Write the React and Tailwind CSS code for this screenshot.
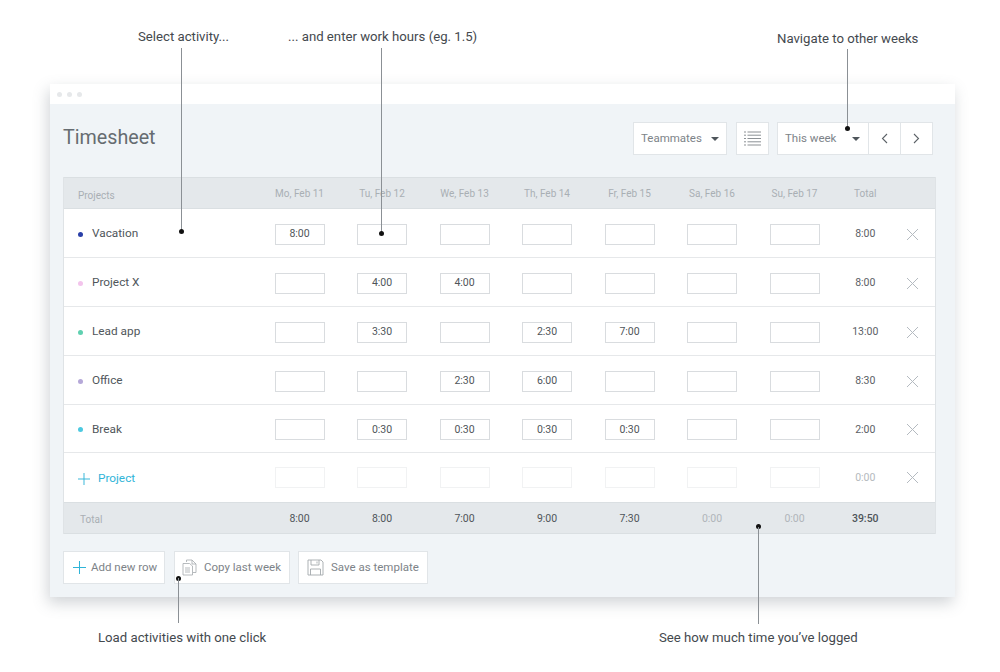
import React from "react";

const COLS = "grid grid-cols-[210.5px_repeat(7,82.5px)_26.5px_1fr] items-center";
const dates = ["Mo, Feb 11", "Tu, Feb 12", "We, Feb 13", "Th, Feb 14", "Fr, Feb 15", "Sa, Feb 16", "Su, Feb 17"];
const rows = [
  { name: "Vacation", dot: "bg-[#2a3fa8]", h: "h-[49px]", v: ["8:00", "", "", "", "", "", ""], total: "8:00" },
  { name: "Project X", dot: "bg-[#f3c4ec]", h: "h-[49px]", v: ["", "4:00", "4:00", "", "", "", ""], total: "8:00" },
  { name: "Lead app", dot: "bg-[#5fd0b0]", h: "h-[49px]", v: ["", "3:30", "", "2:30", "7:00", "", ""], total: "13:00" },
  { name: "Office", dot: "bg-[#b5a8d8]", h: "h-[49px]", v: ["", "", "2:30", "6:00", "", "", ""], total: "8:30" },
  { name: "Break", dot: "bg-[#4cc9e0]", h: "h-[48px]", v: ["", "0:30", "0:30", "0:30", "0:30", "", ""], total: "2:00" },
];
const totals = [["8:00", 1], ["8:00", 1], ["7:00", 1], ["9:00", 1], ["7:30", 1], ["0:00", 0], ["0:00", 0]];

function Close({ color = "#b4bac0" }) {
  return (
    <svg width="13" height="13" viewBox="0 0 13 13" fill="none" stroke={color} strokeWidth="1">
      <path d="M1 1l11 11M12 1L1 12" />
    </svg>
  );
}
function Plus({ size = 14 }) {
  return (
    <svg width={size} height={size} viewBox="0 0 14 14" fill="none" stroke="#2fb4d8" strokeWidth="1.1">
      <path d="M7 0v14M0 7h14" />
    </svg>
  );
}
function Caret() {
  return (
    <svg width="8" height="4" viewBox="0 0 8 4" fill="#4f565c">
      <path d="M0 0h8L4 4z" />
    </svg>
  );
}
function Pin({ className }) {
  return <div className={`absolute w-px bg-[#8b9095] ${className}`}><div className="absolute -bottom-[2px] -left-[2px] w-[5px] h-[5px] rounded-full bg-[#111]" /></div>;
}
function Caption({ className, children }) {
  return <div className={`absolute text-[13.2px] leading-4 text-[#44494e] whitespace-nowrap ${className}`}>{children}</div>;
}
function Cell({ value, faint }) {
  return (
    <div className={`w-[50px] h-[21px] bg-white flex items-center justify-center text-[10.5px] text-[#4f555a] border ${faint ? "border-[#f1f2f3]" : "border-[#d9dcdf]"}`}>
      {value}
    </div>
  );
}
function Btn({ className, children }) {
  return <div className={`h-[33px] bg-white border border-[#e1e5e8] flex items-center text-[11.5px] text-[#7d8388] ${className}`}>{children}</div>;
}

export default function App() {
  return (
    <div className="relative w-[1000px] h-[672px] bg-white overflow-hidden pt-[84px] pl-[50px] font-['Roboto',sans-serif]">
      <div className="w-[905px] h-[513px] bg-[#f0f4f7] shadow-[-2px_6px_14px_rgba(90,100,110,0.28)] flex flex-col">
        <div className="h-5 bg-white flex items-center gap-[5px] pl-[7px] shrink-0">
          <span className="w-[5px] h-[5px] rounded-full bg-[#e6e8ea]" />
          <span className="w-[5px] h-[5px] rounded-full bg-[#e6e8ea]" />
          <span className="w-[5px] h-[5px] rounded-full bg-[#e6e8ea]" />
        </div>
        <div className="h-[73px] shrink-0 pl-[13px] pr-[22px] flex items-start justify-between">
          <div className="text-[19.7px] leading-6 text-[#666c71] mt-[22px]">Timesheet</div>
          <div className="flex mt-[18px]">
            <Btn className="w-[94px] pl-[7px] justify-between pr-[7px] text-[#7d8388]"><span>Teammates</span><Caret /></Btn>
            <Btn className="w-[33px] ml-[9px] justify-center">
              <svg width="17" height="15" viewBox="0 0 17 15" fill="none" stroke="#6f757a" strokeWidth="0.8">
                <path d="M0 1h2M3.500 1H17M0 4.200h2M3.500 4.200H17M0 7.500h2M3.500 7.500H17M0 10.800h2M3.500 10.800H17M0 14h2M3.500 14H17" />
              </svg>
            </Btn>
            <Btn className="w-[92px] ml-[8px] pl-[7px] justify-between pr-[8px]"><span>This week</span><Caret /></Btn>
            <Btn className="w-[33px] -ml-px justify-center">
              <svg width="7" height="11" viewBox="0 0 7 11" fill="none" stroke="#5c6267" strokeWidth="1.1"><path d="M6 1L1.500 5.500 6 10" /></svg>
            </Btn>
            <Btn className="w-[33px] -ml-px justify-center">
              <svg width="7" height="11" viewBox="0 0 7 11" fill="none" stroke="#5c6267" strokeWidth="1.1"><path d="M1 1l4.500 4.500L1 10" /></svg>
            </Btn>
          </div>
        </div>
        <div className="ml-[13px] w-[873px] shrink-0 border-l border-r border-[#dfe3e6]">
          <div className={`${COLS} h-[32px] bg-[#e4e8eb] text-[10px] text-[#a9afb4] border-b border-t border-[#dadfe2]`}>
            <div className="pl-[14px] pt-[4px]">Projects</div>
            {dates.map((d) => (
              <div key={d} className="w-[50px] text-center whitespace-nowrap flex justify-center">{d}</div>
            ))}
            <div className="text-center whitespace-nowrap flex justify-center">Total</div>
            <div />
          </div>
          {rows.map((r) => (
            <div key={r.name} className={`${COLS} ${r.h} bg-white border-b border-[#e6e8ea] pt-[2px]`}>
              <div className="pl-[14px] flex items-center text-[11.8px] text-[#50565b]">
                <span className={`w-[5px] h-[5px] rounded-full ${r.dot}`} />
                <span className="ml-[9px]">{r.name}</span>
              </div>
              {r.v.map((v, i) => <Cell key={i} value={v} />)}
              <div className="text-[10.5px] text-[#5a6065] flex justify-center whitespace-nowrap">{r.total}</div>
              <div className="pl-[27px] flex items-center"><Close /></div>
            </div>
          ))}
          <div className={`${COLS} h-[49px] bg-white`}>
            <div className="pl-[14px] flex items-center text-[11.8px] text-[#2fb4d8] pt-[3px]">
              <Plus size={12} />
              <span className="ml-[8px]">Project</span>
            </div>
            {[0, 1, 2, 3, 4, 5, 6].map((i) => <Cell key={i} value="" faint />)}
            <div className="text-[10.5px] text-[#b4b9bd] flex justify-center whitespace-nowrap">0:00</div>
            <div className="pl-[27px] flex items-center"><Close /></div>
          </div>
          <div className={`${COLS} h-[32px] bg-[#e4e8eb] border-t border-b border-[#dadfe2] pt-[2px]`}>
            <div className="pl-[16px] text-[10px] text-[#a9afb4]">Total</div>
            {totals.map(([t, on], i) => (
              <div key={i} className={`w-[50px] text-center text-[10.5px] ${on ? "text-[#4f555a]" : "text-[#b0b5ba]"}`}>{t}</div>
            ))}
            <div className="text-[10.5px] text-[#4f555a] flex justify-center whitespace-nowrap font-medium">39:50</div>
            <div />
          </div>
        </div>
        <div className="flex ml-[13px] mt-[17px]">
          <Btn className="w-[102px] pl-[9px]">
            <Plus size={13} />
            <span className="ml-[5px]">Add new row</span>
          </Btn>
          <Btn className="w-[116px] ml-[9px] pl-[7px]">
            <svg width="15" height="17" viewBox="0 0 15 17" fill="none" stroke="#a4a9ad" strokeWidth="0.8">
              <path d="M4.500 3V1H10l4 4v8.500h-3M1 4.500h6.500L10.500 7v9H1zM3 9h5M3 11h5M3 13h5M10 1v4h4" />
            </svg>
            <span className="ml-[7px]">Copy last week</span>
          </Btn>
          <Btn className="w-[130px] ml-[8px] pl-[8px]">
            <svg width="17" height="17" viewBox="0 0 17 17" fill="none" stroke="#a4a9ad" strokeWidth="0.9">
              <path d="M1 1h13l2 2v13H1zM4 1v5h8V1M10 2.500v2M3.500 16v-6h10v6" />
            </svg>
            <span className="ml-[7px]">Save as template</span>
          </Btn>
        </div>
      </div>

      <Caption className="left-[138px] top-[29px]">Select activity...</Caption>
      <Caption className="left-[288px] top-[29px]">... and enter work hours (eg. 1.5)</Caption>
      <Caption className="left-[777px] top-[31px]">Navigate to other weeks</Caption>
      <Caption className="left-[98px] top-[630px]">Load activities with one click</Caption>
      <Caption className="left-[659px] top-[630px]">See how much time you’ve logged</Caption>

      <Pin className="left-[181px] top-[48px] h-[184px]" />
      <Pin className="left-[381px] top-[48px] h-[186px]" />
      <Pin className="left-[847px] top-[49px] h-[80px]" />
      <div className="absolute left-[176px] top-[576px] w-[5px] h-[5px] rounded-full bg-[#111]" />
      <div className="absolute left-[178px] top-[578px] w-px h-[45px] bg-[#8b9095]" />
      <div className="absolute left-[756px] top-[524px] w-[5px] h-[5px] rounded-full bg-[#111]" />
      <div className="absolute left-[758px] top-[527px] w-px h-[97px] bg-[#8b9095]" />
    </div>
  );
}
